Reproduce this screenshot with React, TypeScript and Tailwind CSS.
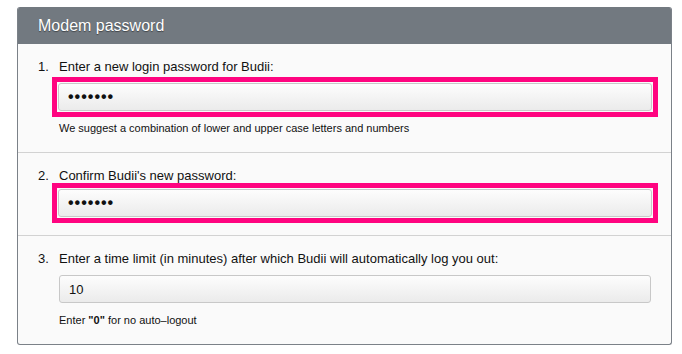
import React from "react";

const font = { fontFamily: '"Liberation Sans", Arial, sans-serif' };

function TextBox({ value, password }: { value: string; password?: boolean }) {
  return (
    <input
      type={password ? "password" : "text"}
      value={value}
      readOnly
      className={`block h-[28px] w-full rounded-[3px] border border-[#c8c8c8] bg-gradient-to-b from-[#fdfdfd] to-[#ebebeb] px-[9px] text-[#111] outline-none ${
        password ? "text-[16px] font-bold tracking-[1px]" : "text-[13px]"
      }`}
    />
  );
}

function Highlight({ children }: { children: React.ReactNode }) {
  return <div className="-mx-[7px] border-[5px] border-[#ff0480] p-[1px]">{children}</div>;
}

export default function App() {
  return (
    <div className="min-h-screen bg-white pt-[7px] pl-[17px] pr-[10px]" style={font}>
      <div className="w-[655px] overflow-hidden rounded-[3px] border border-t-0 border-[#7b8188] bg-[#fafafa]">
        <div className="flex h-[37px] items-center bg-[#727980] px-[20px]">
          <h1 className="text-[16px] text-white [text-shadow:0_1px_1px_rgba(0,0,0,0.45)]">Modem password</h1>
        </div>

        <section className="border-b border-[#d2d2d2] pt-[15px] pb-[17px] pl-[20px] pr-[20px]">
          <div className="flex text-[13px] leading-[15px] text-[#111]">
            <span className="w-[21px]">1.</span>
            <span>Enter a new login password for Budii:</span>
          </div>
          <div className="mt-[3px] ml-[21px]">
            <Highlight>
              <TextBox value="1234567" password />
            </Highlight>
            <p className="mt-[4px] text-[11px] leading-[14px] text-[#111]">
              We suggest a combination of lower and upper case letters and numbers
            </p>
          </div>
        </section>

        <section className="border-b border-[#d2d2d2] pt-[15px] pb-[12px] pl-[20px] pr-[20px]">
          <div className="flex text-[13px] leading-[15px] text-[#111]">
            <span className="w-[21px]">2.</span>
            <span>Confirm Budii's new password:</span>
          </div>
          <div className="ml-[21px]">
            <Highlight>
              <TextBox value="1234567" password />
            </Highlight>
          </div>
        </section>

        <section className="pt-[15px] pb-[17px] pl-[20px] pr-[20px]">
          <div className="flex text-[13px] leading-[15px] text-[#111]">
            <span className="w-[21px]">3.</span>
            <span>Enter a time limit (in minutes) after which Budii will automatically log you out:</span>
          </div>
          <div className="mt-[9px] ml-[21px]">
            <TextBox value="10" />
            <p className="mt-[10px] text-[11px] leading-[14px] text-[#111]">
              Enter <b>"0"</b> for no auto–logout
            </p>
          </div>
        </section>
      </div>
    </div>
  );
}
